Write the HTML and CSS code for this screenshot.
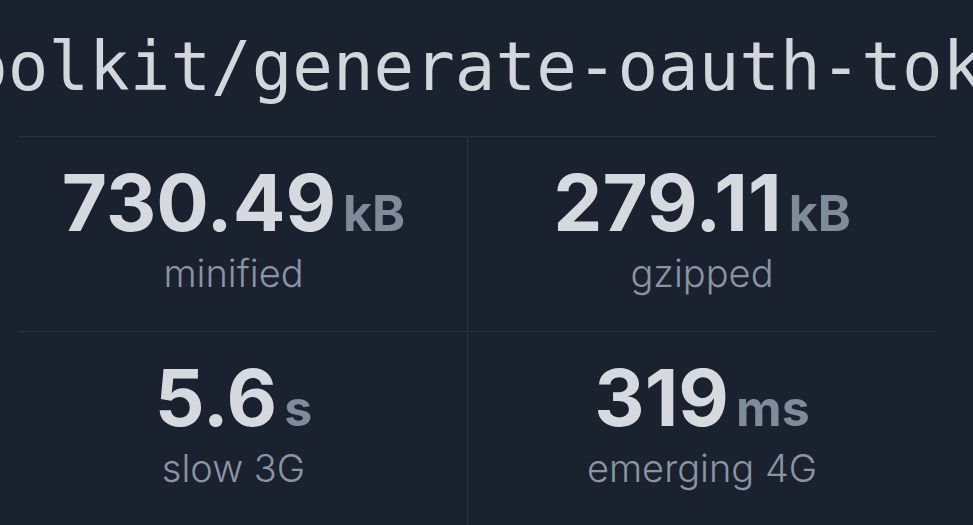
FILE: index.html
```html
<!DOCTYPE html>
<html lang="en">
<head>
  <meta charset="UTF-8" />
  <meta name="viewport" content="width=device-width, initial-scale=1" />
  <title>toolkit/generate-oauth-token</title>
  <link rel="stylesheet" href="styles.css">
</head>
<body>
  <div class="package-name">
    <span>toolkit/generate-oauth-token</span>
  </div>

  <div class="stats">
    <div class="rule"></div>
    <div class="stat stat-left">
      <div class="stat-value">730.49<span class="stat-unit">kB</span></div>
      <div class="stat-label">minified</div>
    </div>
    <div class="stat">
      <div class="stat-value">279.11<span class="stat-unit">kB</span></div>
      <div class="stat-label">gzipped</div>
    </div>
    <div class="rule"></div>
    <div class="stat stat-left">
      <div class="stat-value">5.6<span class="stat-unit">s</span></div>
      <div class="stat-label">slow 3G</div>
    </div>
    <div class="stat">
      <div class="stat-value">319<span class="stat-unit">ms</span></div>
      <div class="stat-label">emerging 4G</div>
    </div>
  </div>
</body>
</html>
```

FILE: styles.css
```css
html, body {
  margin: 0;
  background: #19222e;
  overflow: hidden;
}
body {
  font-family: Inter, "Noto Sans", sans-serif;
  color: #d5d8dd;
}
.package-name {
  display: flex;
  justify-content: center;
  padding-left: 18px;
  margin: 33px 0 35px;
  font-family: "DejaVu Sans Mono", monospace;
  font-size: 67.5px;
  line-height: 1;
  white-space: nowrap;
  color: #d3d6db;
}
.stats {
  display: grid;
  grid-template-columns: 468px 468px;
}
.rule {
  grid-column: 1 / -1;
  height: 1px;
  margin-left: 19px;
  background: #2a3340;
}
.stat {
  padding: 27px 0 39px;
  text-align: center;
}
.stat-left {
  border-right: 1px solid #2a3340;
}
.stat-value {
  font-size: 78px;
  font-weight: 700;
  line-height: 1;
  color: #d6d9de;
}
.stat-unit {
  margin-left: 7px;
  font-size: 50px;
  color: #7f8a9a;
}
.stat-label {
  margin-top: 12px;
  font-size: 38px;
  font-weight: 300;
  line-height: 1;
  color: #8a94a2;
}
```
